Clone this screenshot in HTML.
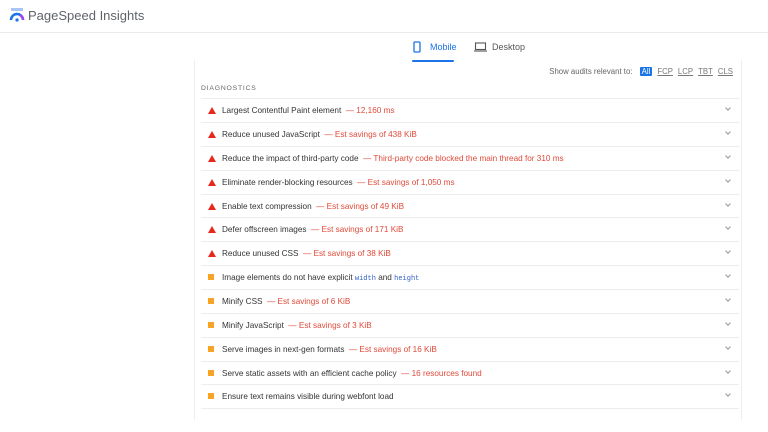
<!DOCTYPE html>
<html><head><style>
*{margin:0;padding:0;box-sizing:border-box}
body{width:768px;height:414px;overflow:hidden;background:#fff;font-family:"Liberation Sans",Arial,sans-serif;color:#212121;position:relative}
.hdr{position:absolute;left:0;top:0;width:768px;height:33px;border-bottom:1px solid #ebebeb}
.logo{position:absolute;left:9px;top:8px}
.title{position:absolute;left:28px;top:8px;font-size:13px;color:#5f6368}
.tab{position:absolute;top:42px;font-size:9px}
.panel{position:absolute;left:194px;top:60px;width:548px;height:360px;border-left:1px solid #eee;border-right:1px solid #eee}
.filt{position:absolute;right:8px;top:7px;font-size:7.8px;color:#666}
.filt span{margin-left:5px;text-decoration:underline;color:#777}
.filt .all{background:#1a73e8;color:#fff;text-decoration:none;padding:0 2px;border-radius:1px}
.diag{position:absolute;left:6px;top:25px;font-size:6.8px;letter-spacing:.8px;color:#666}
.row{position:absolute;left:6px;width:538px;height:24px;border-top:1px solid #ededed;font-size:8.2px;color:#333}
.row .t{position:absolute;left:21px;top:7px;white-space:nowrap}
.row .r{color:#e04a3a}
.row code{font-family:"Liberation Mono",monospace;color:#3060c8;font-size:7px}
.tri{position:absolute;left:7px;top:8px;width:0;height:0;border-left:4px solid transparent;border-right:4px solid transparent;border-bottom:7px solid #e8281a}
.sq{position:absolute;left:7px;top:8px;width:6px;height:6px;background:#f7a325}
.chev{position:absolute;right:9px;top:7px;width:4px;height:4px;border-right:1px solid #999;border-bottom:1px solid #999;transform:rotate(45deg)}
</style></head><body>
<div class="hdr">
<svg class="logo" width="16" height="14" viewBox="0 0 16 14"><rect x="2" y="0" width="12" height="3" fill="#aac4f5"/><path d="M2 12 A6 6 0 0 1 14 12" stroke="#1a73e8" stroke-width="2.5" fill="none"/><path d="M11 7 A6 6 0 0 1 14 12" stroke="#a142f4" stroke-width="2.5" fill="none"/><circle cx="8" cy="12" r="1.6" fill="#1a73e8"/></svg>
<div class="title">PageSpeed Insights</div>
</div>
<svg style="position:absolute;left:413px;top:41px" width="8" height="12" viewBox="0 0 8 12"><rect x="1" y="1" width="6" height="10" rx="1" stroke="#1a73e8" stroke-width="1.3" fill="none"/></svg>
<div class="tab" style="left:430px;color:#1a73e8">Mobile</div>
<div style="position:absolute;left:412px;top:60px;width:42px;height:2px;background:#1a73e8;border-radius:1px"></div>
<svg style="position:absolute;left:474px;top:42px" width="13" height="10" viewBox="0 0 13 10"><rect x="1.5" y="1" width="10" height="6.5" stroke="#555" stroke-width="1.1" fill="none"/><line x1="0" y1="9" x2="13" y2="9" stroke="#555" stroke-width="1.1"/></svg>
<div class="tab" style="left:492px;color:#555">Desktop</div>
<div class="panel">
<div class="filt">Show audits relevant to: <span class="all">All</span><span>FCP</span><span>LCP</span><span>TBT</span><span>CLS</span></div>
<div class="diag">DIAGNOSTICS</div>
<div class="row" style="top:38px"><i class="tri"></i><div class="t">Largest Contentful Paint element <span class="r">&nbsp;— 12,160 ms</span></div><i class="chev"></i></div>
<div class="row" style="top:62px"><i class="tri"></i><div class="t">Reduce unused JavaScript <span class="r">&nbsp;— Est savings of 438 KiB</span></div><i class="chev"></i></div>
<div class="row" style="top:86px"><i class="tri"></i><div class="t">Reduce the impact of third-party code <span class="r">&nbsp;— Third-party code blocked the main thread for 310 ms</span></div><i class="chev"></i></div>
<div class="row" style="top:110px"><i class="tri"></i><div class="t">Eliminate render-blocking resources <span class="r">&nbsp;— Est savings of 1,050 ms</span></div><i class="chev"></i></div>
<div class="row" style="top:134px"><i class="tri"></i><div class="t">Enable text compression <span class="r">&nbsp;— Est savings of 49 KiB</span></div><i class="chev"></i></div>
<div class="row" style="top:157px"><i class="tri"></i><div class="t">Defer offscreen images <span class="r">&nbsp;— Est savings of 171 KiB</span></div><i class="chev"></i></div>
<div class="row" style="top:181px"><i class="tri"></i><div class="t">Reduce unused CSS <span class="r">&nbsp;— Est savings of 38 KiB</span></div><i class="chev"></i></div>
<div class="row" style="top:205px"><i class="sq"></i><div class="t">Image elements do not have explicit <code>width</code> and <code>height</code></div><i class="chev"></i></div>
<div class="row" style="top:229px"><i class="sq"></i><div class="t">Minify CSS <span class="r">&nbsp;— Est savings of 6 KiB</span></div><i class="chev"></i></div>
<div class="row" style="top:253px"><i class="sq"></i><div class="t">Minify JavaScript <span class="r">&nbsp;— Est savings of 3 KiB</span></div><i class="chev"></i></div>
<div class="row" style="top:277px"><i class="sq"></i><div class="t">Serve images in next-gen formats <span class="r">&nbsp;— Est savings of 16 KiB</span></div><i class="chev"></i></div>
<div class="row" style="top:301px"><i class="sq"></i><div class="t">Serve static assets with an efficient cache policy <span class="r">&nbsp;— 16 resources found</span></div><i class="chev"></i></div>
<div class="row" style="top:324px"><i class="sq"></i><div class="t">Ensure text remains visible during webfont load</div><i class="chev"></i></div>
<div class="row" style="top:348px"></div>
</div>
</body></html>
